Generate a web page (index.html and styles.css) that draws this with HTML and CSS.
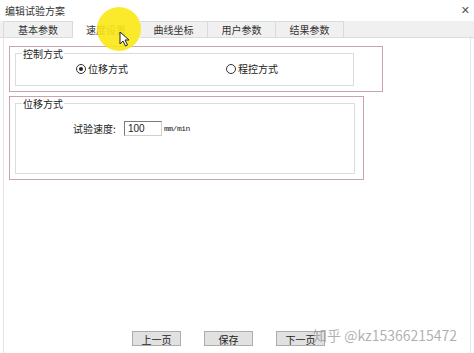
FILE: index.html
```html
<!DOCTYPE html>
<html lang="zh-CN">
  <head>
    <meta charset="UTF-8" />
    <title>编辑试验方案</title>
    <link rel="stylesheet" href="styles.css">
  </head>
  <body>
    <div class="window">
      <div class="titlebar">
        <span class="title">编辑试验方案</span>
        <span class="close">✕</span>
      </div>

      <div class="tabs">
        <div class="tab">基本参数</div>
        <div class="tab active">速度设置</div>
        <div class="tab">曲线坐标</div>
        <div class="tab">用户参数</div>
        <div class="tab">结果参数</div>
      </div>

      <div class="page">
        <div class="mark mark-mode">
          <fieldset class="group group-mode">
            <legend>控制方式</legend>
            <div class="radios">
              <label class="radio"><span class="dot checked"></span>位移方式</label>
              <label class="radio"><span class="dot"></span>程控方式</label>
            </div>
          </fieldset>
        </div>

        <div class="mark mark-speed">
          <fieldset class="group group-speed">
            <legend>位移方式</legend>
            <div class="speed">
              <span class="speed-label">试验速度:</span>
              <span class="speed-input">100</span>
              <span class="unit">mm/min</span>
            </div>
          </fieldset>
        </div>

        <div class="buttons">
          <button>上一页</button>
          <button>保存</button>
          <button>下一页</button>
        </div>
      </div>

      <!-- overlays from the recording -->
      <div class="pointer">
        <svg width="12" height="16" viewBox="0 0 12 16">
          <path d="M1 1 L1 13 L4 10 L6.5 15 L8.5 14 L6 9 L10 9 Z" fill="#fff" stroke="#222" stroke-width="1"/>
        </svg>
      </div>
      <div class="watermark">知乎 @kz15366215472</div>
    </div>
  </body>
</html>
```

FILE: styles.css
```css
* {
  margin: 0;
  padding: 0;
  box-sizing: border-box;
}
body {
  width: 474px;
  height: 353px;
  overflow: hidden;
  background-color: #fff;
  font-family: "Noto Sans CJK SC", "Liberation Sans", sans-serif;
  font-size: 10px;
  color: #222;
}
.window {
  position: relative;
  width: 474px;
  height: 353px;
  display: flex;
  flex-direction: column;
}
.titlebar {
  height: 21px;
  display: flex;
  align-items: center;
  justify-content: space-between;
  padding: 0 4px 1px 5px;
  background-color: #fff;
}
.title {
  font-size: 10px;
  color: #333;
}
.close {
  font-size: 11px;
  color: #555;
  font-family: "DejaVu Sans", sans-serif;
}
.tabs {
  height: 17px;
  display: flex;
  align-items: flex-end;
  padding-left: 3px;
  background-color: #f0f0f0;
  border-bottom: 1px solid #dcdcdc;
}
.tab {
  width: 68px;
  height: 16px;
  display: flex;
  align-items: center;
  justify-content: center;
  border: 1px solid #dadada;
  border-bottom: none;
  border-left: none;
  background-color: #f0f0f0;
  font-size: 10px;
  color: #333;
}
.tab:first-child {
  width: 70px;
  border-left: 1px solid #dadada;
}
.tab.active {
  height: 18px;
  width: 67px;
  margin-bottom: -1px;
  background-color: #fff;
  border-color: #fff;
}
.page {
  flex: 1;
  display: flex;
  flex-direction: column;
  margin: 0 3px 0 3px;
  background-color: #fff;
  border-left: 1px solid #e4e4e4;
  border-right: 1px solid #e4e4e4;
  padding: 8px 0 0 5px;
}
.mark {
  border: 1px solid #c9a5ad;
  padding: 0 6px 5px 5px;
}
.mark-mode {
  width: 374px;
  height: 46px;
  padding-right: 28px;
}
.mark-speed {
  width: 355px;
  height: 84px;
  margin-top: 4px;
  padding-right: 8px;
}
.group {
  border: 1px solid #dcdcdc;
  padding: 0;
  height: 100%;
}
.group legend {
  margin-left: 6px;
  padding: 0 1px;
  font-size: 10px;
  color: #222;
  line-height: 13px;
}
.radios {
  display: flex;
  padding: 1px 0 0 60px;
  gap: 98px;
}
.radio {
  display: flex;
  align-items: center;
  gap: 2px;
  font-size: 10px;
}
.dot {
  width: 10px;
  height: 10px;
  border: 1px solid #333;
  border-radius: 50%;
  display: flex;
  align-items: center;
  justify-content: center;
}
.dot.checked::after {
  content: "";
  width: 4px;
  height: 4px;
  border-radius: 50%;
  background-color: #222;
}
.speed {
  display: flex;
  align-items: center;
  padding: 11px 0 0 57px;
}
.speed-label {
  width: 51px;
}
.speed-input {
  width: 38px;
  height: 15px;
  border: 1px solid #7a7a7a;
  border-right-color: #cfcfcf;
  border-bottom-color: #cfcfcf;
  padding: 1px 3px;
  font-family: "Liberation Sans", sans-serif;
  font-size: 10px;
  line-height: 12px;
}
.unit {
  margin-left: 2px;
  font-family: "Liberation Mono", monospace;
  font-size: 8px;
  letter-spacing: -0.5px;
}
.buttons {
  margin-top: auto;
  margin-bottom: 7px;
  display: flex;
  justify-content: center;
  gap: 23px;
  padding-right: 22px;
}
.buttons button {
  width: 49px;
  height: 15px;
  background-color: #e1e1e1;
  border: 1px solid #adadad;
  font-family: "Noto Sans CJK SC", sans-serif;
  font-size: 10px;
  color: #222;
}
.pointer {
  position: absolute;
  left: 97px;
  top: 7px;
  width: 44px;
  height: 44px;
  border-radius: 50%;
  background-color: rgba(250, 232, 20, 0.9);
}
.pointer svg {
  position: absolute;
  left: 22px;
  top: 24px;
}
.watermark {
  position: absolute;
  left: 313px;
  top: 325px;
  font-family: "Noto Sans CJK SC", "Liberation Sans", sans-serif;
  font-size: 14px;
  color: rgba(150, 150, 150, 0.75);
}
```
